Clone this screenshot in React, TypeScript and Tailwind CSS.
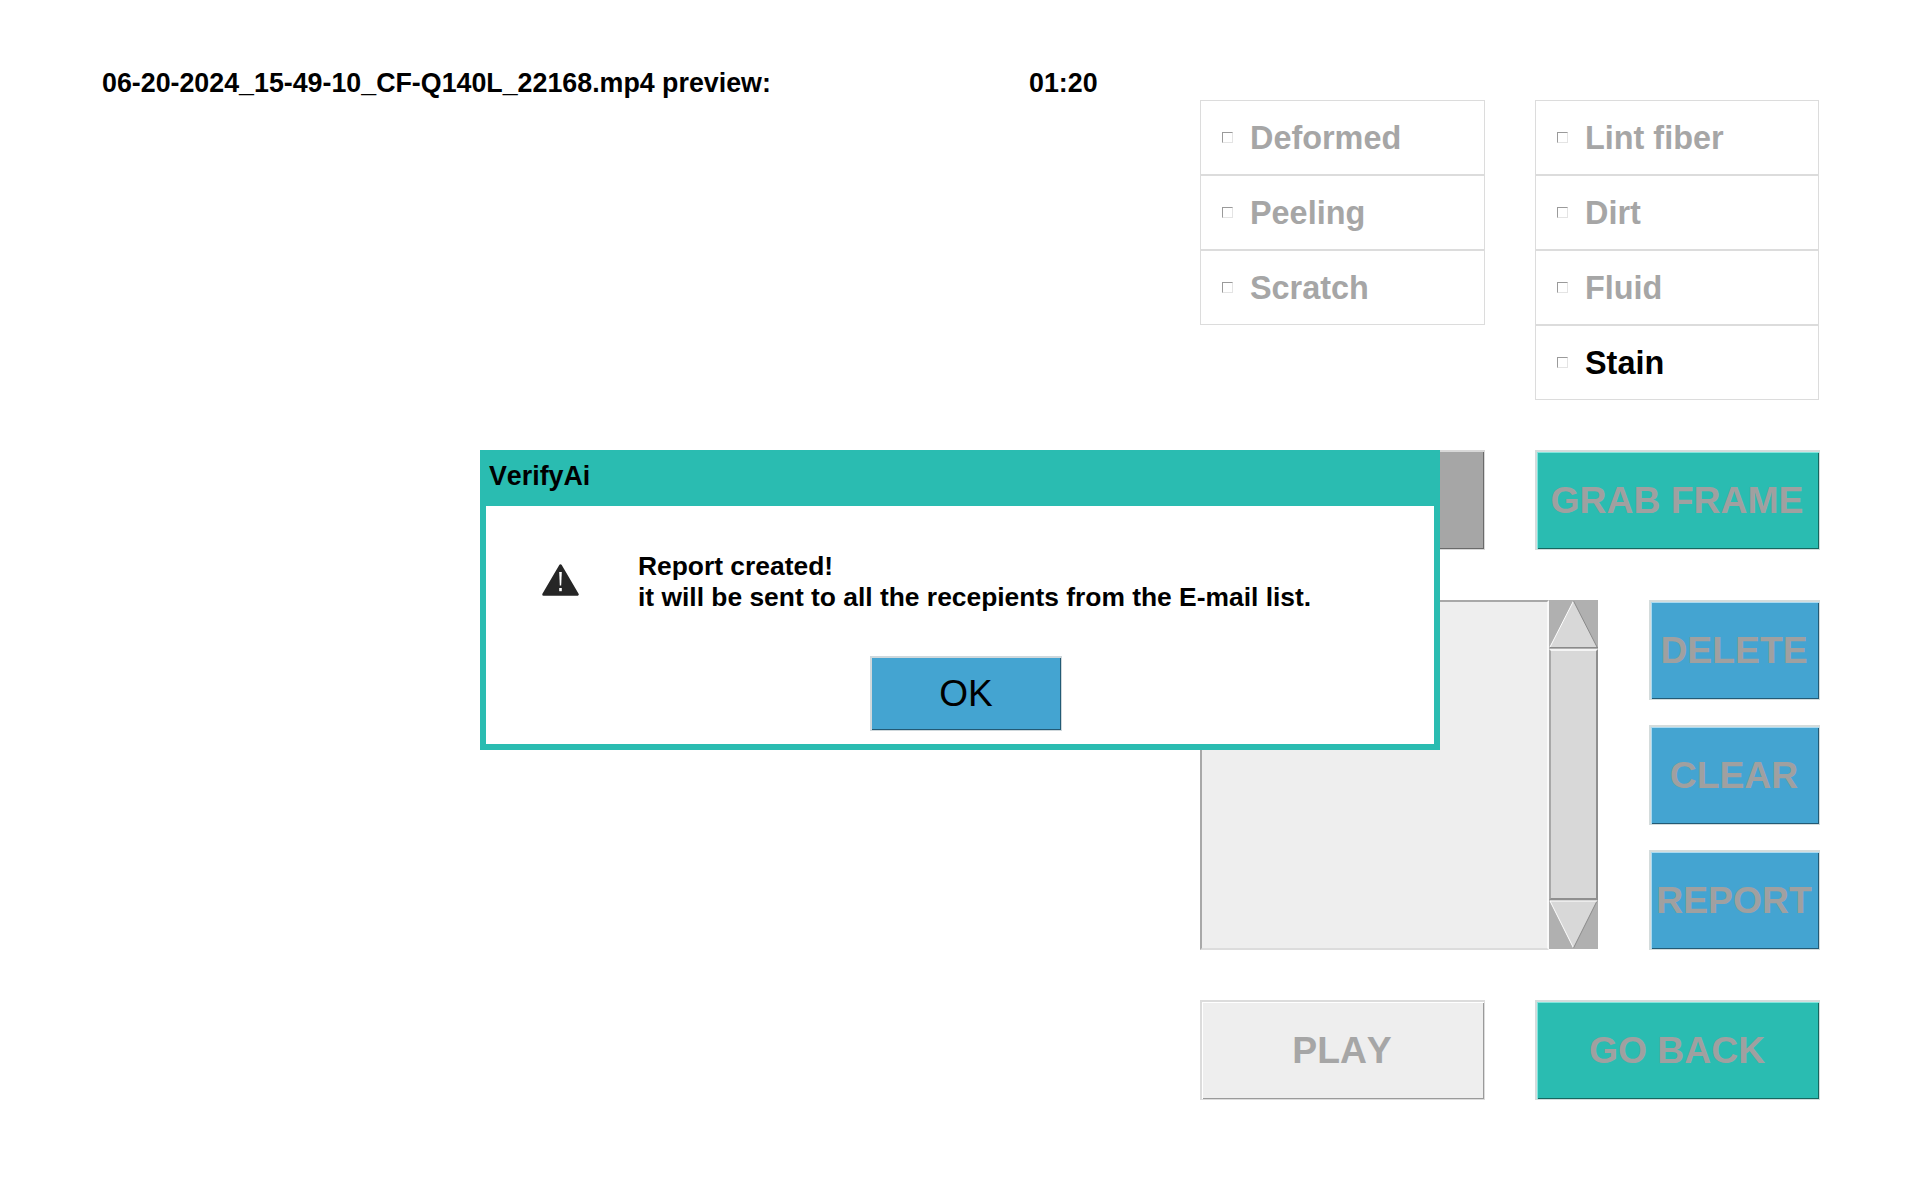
import React from 'react';

const leftDefects = ['Deformed', 'Peeling', 'Scratch'];
const rightDefects = ['Lint fiber', 'Dirt', 'Fluid', 'Stain'];

const DefectRow: React.FC<{ label: string; active?: boolean }> = ({ label, active }) => (
  <div className="h-[75px] border border-[#dcdcdc] flex items-center pl-[21px] bg-white">
    <span className="w-[11px] h-[11px] border border-t-[#9a9a9a] border-l-[#9a9a9a] border-r-[#e4e4e4] border-b-[#e4e4e4] bg-white" />
    <span className={`ml-[17px] pt-[2px] text-[32.4px] font-bold ${active ? 'text-black' : 'text-[#a6a6a6]'}`}>{label}</span>
  </div>
);

const TealButton: React.FC<{ label: string }> = ({ label }) => (
  <button className="h-[100px] w-full border-t-2 border-l-2 border-r border-b border-[#d4dcdc] bg-[#2abcb1] pt-[1px] pr-[2px] text-[37.3px] font-bold text-[#a0a0a0] shadow-[inset_1px_1px_0_#7fe6de,inset_-1px_-1px_0_#17665f] whitespace-nowrap">
    {label}
  </button>
);

const BlueButton: React.FC<{ label: string }> = ({ label }) => (
  <button className="h-[100px] w-full border-t-2 border-l-2 border-r border-b border-[#d4dcdc] bg-[#44a4d1] pt-[1px] pr-[2px] text-[37.3px] font-bold text-[#a0a0a0] shadow-[inset_1px_1px_0_#a8daf2,inset_-1px_-1px_0_#235a75] whitespace-nowrap">
    {label}
  </button>
);

const ScrollArrow: React.FC<{ down?: boolean }> = ({ down }) => (
  <svg width="49" height="49" viewBox="0 0 49 49" className="block bg-[#b0b0b0]">
    {down ? (
      <>
        <path d="M1 1 L48 1 L24.5 48 Z" fill="#d8d8d8" />
        <path d="M1 1 L24.5 48" stroke="#ffffff" strokeWidth="1" fill="none" />
        <path d="M48 1 L24.5 48" stroke="#8a8a8a" strokeWidth="1" fill="none" />
        <path d="M1 1 L48 1" stroke="#ffffff" strokeWidth="1" fill="none" />
      </>
    ) : (
      <>
        <path d="M24.5 1 L1 47 L48 47 Z" fill="#d8d8d8" />
        <path d="M24.5 1 L1 47" stroke="#ffffff" strokeWidth="1" fill="none" />
        <path d="M24.5 1 L48 47" stroke="#8a8a8a" strokeWidth="1" fill="none" />
        <path d="M1 47.5 L49 47.5" stroke="#8a8a8a" strokeWidth="1" fill="none" />
      </>
    )}
  </svg>
);

const WarningIcon = () => (
  <svg width="37" height="32" viewBox="0 0 37 32">
    <path d="M18.5 1.5 L35.5 30.5 L1.5 30.5 Z" fill="#262626" stroke="#262626" strokeWidth="2.5" strokeLinejoin="round" />
    <path d="M17.2 8 L19.8 8 L19.2 21.5 L17.8 21.5 Z" fill="#ffffff" />
    <rect x="17.2" y="24" width="2.6" height="3.2" fill="#ffffff" />
  </svg>
);

export default function App() {
  return (
    <div className="relative w-[1920px] h-[1200px] bg-white text-black font-['Liberation_Sans',Arial,sans-serif] [font-kerning:none] overflow-hidden flex">
      {/* left side: preview header */}
      <div className="w-[1200px] pt-[67px] pl-[102px]">
        <div className="flex text-[26.8px] font-bold leading-[32px]">
          <span className="w-[927px]">06-20-2024_15-49-10_CF-Q140L_22168.mp4 preview:</span>
          <span>01:20</span>
        </div>
      </div>

      {/* right side: controls */}
      <div className="w-[620px] pt-[100px] flex flex-col">
        <div className="grid grid-cols-[285px_284px] gap-x-[50px] h-[300px] items-start">
          <div className="flex flex-col">
            {leftDefects.map(d => <DefectRow key={d} label={d} />)}
          </div>
          <div className="flex flex-col">
            {rightDefects.map(d => <DefectRow key={d} label={d} active={d === 'Stain'} />)}
          </div>
        </div>

        <div className="grid grid-cols-[285px_285px] gap-x-[50px] mt-[50px]">
          <div className="h-[100px] border-t-2 border-l-2 border-r border-b border-[#d8d8d8] bg-[#a6a6a6] shadow-[inset_-1px_-1px_0_#6a6a6a]" />
          <TealButton label="GRAB FRAME" />
        </div>

        <div className="flex mt-[50px] h-[350px]">
          <div className="w-[349px] h-[350px] bg-[#eeeeee] border-2 border-t-[#a8a8a8] border-l-[#a8a8a8] border-r-[#fafafa] border-b-[#dcdcdc]" />
          <div className="w-[49px] h-[349px] flex flex-col">
            <ScrollArrow />
            <div className="flex-1 bg-[#d8d8d8] border-2 border-[#8f8f8f] border-t-[#f4f4f4] border-l-[#a8a8a8]" />
            <ScrollArrow down />
          </div>
          <div className="w-[171px] ml-[51px] flex flex-col gap-[25px]">
            <BlueButton label="DELETE" />
            <BlueButton label="CLEAR" />
            <BlueButton label="REPORT" />
          </div>
        </div>

        <div className="grid grid-cols-[285px_285px] gap-x-[50px] mt-[50px]">
          <button className="h-[100px] border-t-2 border-l-2 border-r border-b border-[#dcdcdc] bg-[#eeeeee] pt-[1px] pr-[2px] text-[37.3px] font-bold text-[#a6a6a6] shadow-[inset_1px_1px_0_#ffffff,inset_-1px_-1px_0_#9a9a9a]">
            PLAY
          </button>
          <TealButton label="GO BACK" />
        </div>
      </div>

      {/* modal dialog */}
      <div className="absolute left-[480px] top-[450px] w-[960px] h-[300px] border-[6px] border-[#2abcb1] bg-white flex flex-col">
        <div className="h-[46px] -mx-[6px] -mt-[6px] pt-[10px] bg-[#2abcb1] box-content pl-[9px] text-[26.8px] font-bold leading-[32px]">
          VerifyAi
        </div>
        <div className="flex pt-[45px] pl-[56px]">
          <div className="pt-[13px]"><WarningIcon /></div>
          <div className="ml-[59px] text-[26.4px] font-bold leading-[31px]">
            <div>Report created!</div>
            <div>it will be sent to all the recepients from the E-mail list.</div>
          </div>
        </div>
        <div className="flex pl-[384px] mt-auto pb-[13px]">
          <button className="w-[192px] h-[75px] border-t-2 border-l-2 border-r border-b border-[#cfd8dc] bg-[#44a4d1] pr-[1px] text-[37px] text-black shadow-[inset_-1px_-1px_0_#235a75]">
            OK
          </button>
        </div>
      </div>
    </div>
  );
}
